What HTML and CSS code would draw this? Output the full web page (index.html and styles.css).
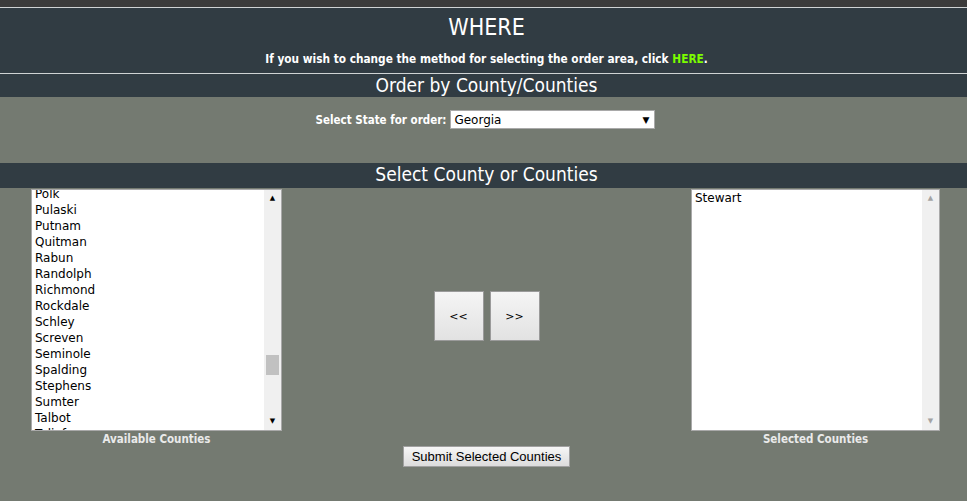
FILE: index.html
```html
<!DOCTYPE html>
<html lang="en">
<head>
    <meta charset="UTF-8">
    <title>Where - Order by County</title>
    <link rel="stylesheet" href="styles.css">
</head>
<body>
    <div class="topbar"></div>
    <div class="where">
        <div class="where-title">WHERE</div>
        <div class="where-note">If you wish to change the method for selecting the order area, click <a href="#" class="here">HERE</a>.</div>
    </div>
    <div class="band">Order by County/Counties</div>
    <div class="state-row">
        <label class="state-label">Select State for order:</label>
        <div class="state-select">
            <span>Georgia</span>
            <span class="caret">&#9660;</span>
        </div>
    </div>
    <div class="band band-counties">Select County or Counties</div>

    <div class="picker">
        <div class="col">
            <div class="listbox">
                <ul class="items">
                    <li>Polk</li>
                    <li>Pulaski</li>
                    <li>Putnam</li>
                    <li>Quitman</li>
                    <li>Rabun</li>
                    <li>Randolph</li>
                    <li>Richmond</li>
                    <li>Rockdale</li>
                    <li>Schley</li>
                    <li>Screven</li>
                    <li>Seminole</li>
                    <li>Spalding</li>
                    <li>Stephens</li>
                    <li>Sumter</li>
                    <li>Talbot</li>
                    <li>Taliaferro</li>
                </ul>
                <div class="scrollbar">
                    <span class="arrow up">&#9650;</span>
                    <div class="track"><div class="thumb"></div></div>
                    <span class="arrow down">&#9660;</span>
                </div>
            </div>
            <div class="caption">Available Counties</div>
        </div>

        <div class="movers">
            <button class="move">&lt;&lt;</button>
            <button class="move">&gt;&gt;</button>
        </div>

        <div class="col">
            <div class="listbox selected">
                <ul class="items">
                    <li>Stewart</li>
                </ul>
                <div class="scrollbar disabled">
                    <span class="arrow up">&#9650;</span>
                    <div class="track"></div>
                    <span class="arrow down">&#9660;</span>
                </div>
            </div>
            <div class="caption">Selected Counties</div>
        </div>
    </div>

    <div class="submit-row">
        <button class="submit">Submit Selected Counties</button>
    </div>
</body>
</html>
```

FILE: styles.css
```css
body {
    margin: 0;
    background-color: #747a71;
    color: #fff;
    font-family: "DejaVu Sans", Verdana, sans-serif;
    font-size: 12px;
}

.topbar {
    height: 7px;
    background-color: #3b3b3b;
    border-bottom: 1px solid #cfd3d4;
}

.where {
    background-color: #313c43;
    height: 65px;
    text-align: center;
    padding-left: 6px;
    border-bottom: 1px solid #cfd3d4;
}

.where-title {
    font-family: "DejaVu Sans Condensed", sans-serif;
    font-size: 23px;
    padding-top: 5px;
    line-height: 28px;
}

.where-note {
    font-family: "DejaVu Sans Condensed", sans-serif;
    font-weight: bold;
    font-size: 11.75px;
    margin-top: 11px;
}

.here {
    color: #7cfc00;
    text-decoration: none;
}

.band {
    background-color: #313c43;
    height: 23px;
    line-height: 22px;
    text-align: center;
    padding-left: 6px;
    font-family: "DejaVu Sans Condensed", sans-serif;
    font-size: 19px;
}

.band-counties {
    height: 25px;
    line-height: 23px;
}

.state-row {
    display: flex;
    justify-content: center;
    align-items: flex-start;
    gap: 4px;
    height: 66px;
    box-sizing: border-box;
    padding-top: 13px;
    padding-left: 4px;
}

.state-label {
    font-family: "DejaVu Sans Condensed", sans-serif;
    font-weight: bold;
    font-size: 11.5px;
    line-height: 20px;
}

.state-select {
    width: 195px;
    height: 17px;
    background: #fff;
    border: 1px solid #a9a9a9;
    color: #000;
    display: flex;
    justify-content: space-between;
    align-items: center;
    padding: 0 5px 0 3px;
    font-size: 12px;
}

.caret {
    font-size: 9px;
}

.picker {
    display: flex;
    justify-content: space-between;
    align-items: flex-start;
    padding: 1px 27px 0 31px;
}

.col {
    display: flex;
    flex-direction: column;
    align-items: center;
}

.listbox {
    display: flex;
    width: 249px;
    height: 240px;
    border: 1px solid #a9a9a9;
    background: #fff;
    overflow: hidden;
}

.listbox.selected {
    width: 247px;
}

.items {
    flex: 1;
    list-style: none;
    margin: -4px 0 0;
    padding: 0 0 0 3px;
    color: #000;
    line-height: 16px;
}

.selected .items {
    margin-top: 0;
}

.scrollbar {
    width: 17px;
    background: #f0f0f0;
    display: flex;
    flex-direction: column;
    align-items: center;
    color: #000;
}

.arrow {
    font-size: 7px;
    height: 17px;
    line-height: 17px;
}

.track {
    flex: 1;
    width: 100%;
    position: relative;
}

.thumb {
    position: absolute;
    left: 2px;
    right: 2px;
    top: 148px;
    height: 20px;
    background: #c1c1c1;
}

.disabled .arrow {
    color: #a3a3a3;
}

.caption {
    font-family: "DejaVu Sans Condensed", sans-serif;
    font-weight: bold;
    font-size: 11.5px;
    color: #eaeaea;
    margin-top: 1px;
}

.movers {
    display: flex;
    gap: 6px;
    margin-top: 102px;
}

.move {
    width: 50px;
    height: 50px;
    border: 1px solid #9a9a9a;
    background: linear-gradient(#f5f5f5, #e2e2e2);
    font-family: "DejaVu Sans", sans-serif;
    font-size: 11px;
    color: #000;
    padding: 0;
}

.submit-row {
    display: flex;
    justify-content: center;
    margin-top: 0;
    padding-left: 6px;
}

.submit {
    width: 167px;
    height: 21px;
    border: 1px solid #a0a0a0;
    background: linear-gradient(#f6f6f6, #dcdcdc);
    font-family: "Liberation Sans", Arial, sans-serif;
    font-size: 13px;
    color: #000;
    padding: 0;
}
```
